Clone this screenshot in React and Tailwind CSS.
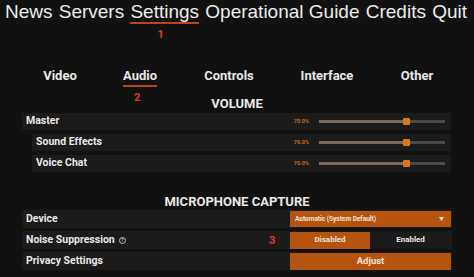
const navItems = ["News", "Servers", "Settings", "Operational Guide", "Credits", "Quit"];

const tabs = ["Video", "Audio", "Controls", "Interface", "Other"];

const volumeRows = [
  { label: "Master", value: 70, indent: false },
  { label: "Sound Effects", value: 70, indent: true },
  { label: "Voice Chat", value: 70, indent: true },
];

// petit chiffre rouge d'annotation posé sur la capture
const Marker = ({ n, className }) => (
  <span
    className={`absolute font-['Roboto',sans-serif] text-[11px] font-bold leading-none text-[#e2382c] ${className}`}
  >
    {n}
  </span>
);

const Slider = ({ value }) => (
  <div className="flex items-center">
    <span className="text-[5.5px] font-bold leading-none text-[#c9691d]">{value.toFixed(1)}%</span>
    <div className="relative ml-[10px] h-[3px] w-[126px] bg-[#4a4a4a]">
      <div className="absolute left-0 top-0 h-[3px] bg-[#7c665d]" style={{ width: `${value}%` }} />
      <div
        className="absolute top-[-2px] h-[7px] w-[7px] rounded-[1px] bg-[#d9771c]"
        style={{ left: `calc(${value}% - 4px)` }}
      />
    </div>
  </div>
);

const VolumeRow = ({ row }) => (
  <div
    className={`flex h-[17px] items-center bg-[#1b1b1b] pl-[4px] pr-[6px] ${
      row.indent ? "ml-[32px]" : "ml-[22px]"
    } mr-[23px]`}
  >
    <span className="text-[10.5px] font-bold leading-none text-[#e8e8e8]">{row.label}</span>
    <div className="ml-auto">
      <Slider value={row.value} />
    </div>
  </div>
);

const MicRow = ({ label, help, children, marker }) => (
  <div className="relative ml-[22px] mr-[22px] flex h-[18px] items-center bg-[#1b1b1b] pl-[4px] pr-[1px]">
    <span className="text-[10.5px] font-bold leading-none text-[#e8e8e8]">{label}</span>
    {help && (
      <span className="ml-[4px] inline-flex h-[7px] w-[7px] items-center justify-center rounded-full border border-[#bdbdbd] text-[5px] font-bold leading-none text-[#bdbdbd]">
        ?
      </span>
    )}
    {marker && <Marker n={marker} className="left-[247px] top-[4px]" />}
    <div className="ml-auto w-[161px]">{children}</div>
  </div>
);

export default function App() {
  return (
    <div className="relative h-[277px] w-[474px] overflow-hidden bg-[#111111] font-['Roboto',sans-serif] text-[#e8e8e8]">
      {/* menu principal */}
      <nav className="flex justify-between pl-[5px] pr-[7px] pt-[1px] font-['Liberation_Sans',Arial,sans-serif] text-[19px] leading-[22px] text-[#ececec]">
        {navItems.map((item) => (
          <span key={item} className="relative">
            {item}
            {item === "Settings" && (
              <>
                <span className="absolute left-0 right-0 top-[21px] h-[2px] bg-[#b9461c]" />
                <Marker n="1" className="left-[27px] top-[28px]" />
              </>
            )}
          </span>
        ))}
      </nav>

      {/* onglets */}
      <div className="ml-[20px] mt-[45px] grid grid-cols-[80px_80px_98px_98px_82px] text-[13px] font-bold leading-[16px]">
        {tabs.map((tab) => (
          <div key={tab} className="flex justify-center">
            <span className="relative">
              {tab}
              {tab === "Audio" && (
                <>
                  <span className="absolute left-0 right-0 top-[17px] h-[2px] bg-[#b9461c]" />
                  <Marker n="2" className="left-[11px] top-[24px]" />
                </>
              )}
            </span>
          </div>
        ))}
      </div>

      <h2 className="mt-[12px] text-center text-[13px] font-bold leading-[16px]">VOLUME</h2>
      <div className="mt-[1px] flex flex-col gap-[4px]">
        {volumeRows.map((row) => (
          <VolumeRow key={row.label} row={row} />
        ))}
      </div>

      <h2 className="mt-[22px] text-center text-[13px] font-bold leading-[16px]">MICROPHONE CAPTURE</h2>
      <div className="flex flex-col gap-[3px]">
        <MicRow label="Device">
          <div className="flex h-[16px] items-center justify-between bg-[#b4540f] pl-[5px] pr-[7px]">
            <span className="text-[6.5px] font-bold leading-none text-[#f3e6dc]">Automatic (System Default)</span>
            <svg width="5" height="4" viewBox="0 0 5 4">
              <path d="M0 0h5L2.5 4z" fill="#f3e6dc" />
            </svg>
          </div>
        </MicRow>
        <MicRow label="Noise Suppression" help marker="3">
          <div className="flex h-[17px] text-[8px] font-bold leading-none">
            <div className="flex w-[80px] items-center justify-center bg-[#b4540f] text-[#f0e2d6]">Disabled</div>
            <div className="flex flex-1 items-center justify-center text-[#e8e8e8]">Enabled</div>
          </div>
        </MicRow>
        <MicRow label="Privacy Settings">
          <div className="flex h-[17px] items-center justify-center bg-[#b4540f] text-[9.5px] font-bold leading-none text-[#f0e2d6]">
            Adjust
          </div>
        </MicRow>
      </div>
    </div>
  );
}
